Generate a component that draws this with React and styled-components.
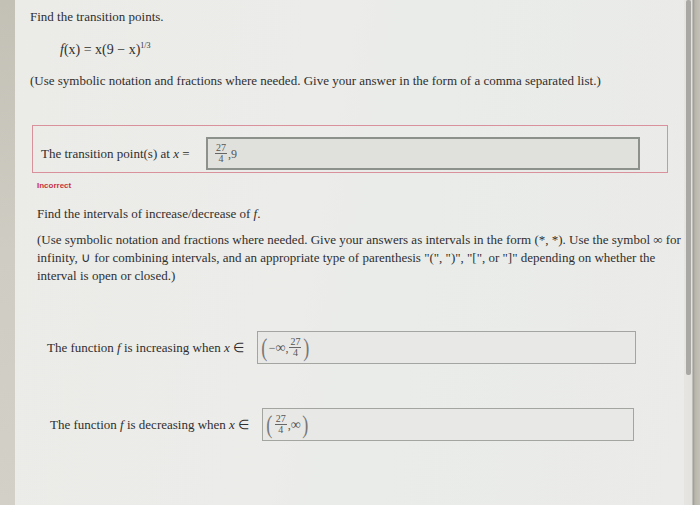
import React from 'react';
import styled, { createGlobalStyle } from 'styled-components';

const GlobalStyle = createGlobalStyle`
  html, body { margin: 0; padding: 0; }
  body {
    background: #c9c6bd;
    font-family: "Liberation Serif", "Times New Roman", serif;
    color: #2f2f2f;
  }
  * { box-sizing: border-box; }
`;

const Screen = styled.div`
  display: flex;
  width: 700px;
  height: 505px;
  overflow: hidden;
`;

const LeftStrip = styled.div`
  width: 15px;
  flex: none;
  background: linear-gradient(180deg, #c3c1b6 0%, #cfccc3 50%, #d3d0c8 100%);
`;

const Panel = styled.div`
  flex: 1;
  background: linear-gradient(100deg, #ebebe8 0%, #ececea 45%, #e9ece9 55%, #ebebe9 100%);
  padding-top: 8px;
  font-size: 13px;
  line-height: 18px;
`;

const ScrollTrack = styled.div`
  width: 16px;
  flex: none;
  display: flex;
  background: linear-gradient(90deg, #e6e5e2 0px, #e3e2de 8px, #9c9a94 9px, #b9b6ad 11px, #c4c1b8 16px);
`;

const Thumb = styled.div`
  width: 5px;
  height: 375px;
  margin-left: 2px;
  background: #a9a8a4;
  border-radius: 2px;
`;

const Line = styled.div`
  margin-left: ${p => p.$indent || 0}px;
  margin-top: ${p => p.$top || 0}px;
  font-size: ${p => p.$size || 13}px;
  white-space: nowrap;
`;

const I = styled.i`
  font-style: italic;
`;

const Sup = styled.sup`
  font-size: 8px;
  vertical-align: 6px;
  line-height: 0;
`;

const RedBox = styled.div`
  margin: 35px 0 0 17px;
  width: 636px;
  height: 48px;
  border: 1px solid #d9929b;
  display: flex;
  align-items: center;
  padding: 11px 0 2px;
`;

const Label = styled.span`
  white-space: nowrap;
  width: ${p => p.$w}px;
  flex: none;
  padding-left: ${p => p.$pad || 0}px;
`;

const AnswerBox = styled.div`
  width: ${p => p.$w}px;
  height: 33px;
  border: ${p => (p.$dark ? '2px solid #8d918c' : '1px solid #a3a5a1')};
  background: ${p => (p.$dark ? '#e0e1dd' : '#e8e8e6')};
  display: flex;
  align-items: center;
  padding-left: ${p => p.$pad || 4}px;
  font-size: 12px;
  color: #555;
`;

const Inf = styled.span`
  font-size: 14px;
`;

const Frac = styled.span`
  display: inline-flex;
  flex-direction: column;
  align-items: center;
  font-size: 10px;
  line-height: 10px;
  margin: 0 1px;
  span:first-child {
    border-bottom: 1px solid #666;
    padding: 0 1px;
  }
`;

const Paren = styled.span`
  font-size: 26px;
  line-height: 24px;
  color: #777;
  transform: scaleX(0.7);
  display: inline-block;
`;

const Incorrect = styled.div`
  margin: 8px 0 0 22px;
  font-family: "Liberation Sans", Arial, sans-serif;
  font-weight: bold;
  font-size: 8px;
  line-height: 10px;
  color: #c8323f;
`;

const Row = styled.div`
  display: flex;
  align-items: center;
  margin-top: ${p => p.$top}px;
`;

const Fraction = ({ n, d }) => (
  <Frac>
    <span>{n}</span>
    <span>{d}</span>
  </Frac>
);

export default function App() {
  return (
    <>
      <GlobalStyle />
      <Screen>
        <LeftStrip />
        <Panel>
          <Line $indent={15}>Find the transition points.</Line>
          <Line $indent={45} $top={15} $size={14}>
            <I>f</I>(x) = x(9 − x)<Sup>1/3</Sup>
          </Line>
          <Line $indent={15} $top={13}>
            (Use symbolic notation and fractions where needed. Give your answer in the form of a comma separated list.)
          </Line>

          <RedBox>
            <Label $w={173} $pad={8}>The transition point(s) at <I>x</I> =</Label>
            <AnswerBox $w={434} $dark $pad={6}>
              <Fraction n="27" d="4" />,9
            </AnswerBox>
          </RedBox>
          <Incorrect>Incorrect</Incorrect>

          <Line $indent={22} $top={14}>
            Find the intervals of increase/decrease of <I>f</I>.
          </Line>
          <Line $indent={22} $top={8}>
            (Use symbolic notation and fractions where needed. Give your answers as intervals in the form (*, *). Use the symbol ∞ for
          </Line>
          <Line $indent={22}>
            infinity, ∪ for combining intervals, and an appropriate type of parenthesis "(", ")", "[", or "]" depending on whether the
          </Line>
          <Line $indent={22}>interval is open or closed.)</Line>

          <Row $top={46}>
            <Label $w={242} $pad={32}>The function <I>f</I> is increasing when <I>x</I> ∈</Label>
            <AnswerBox $w={379} $pad={2}>
              <Paren>(</Paren>−<Inf>∞</Inf>,<Fraction n="27" d="4" /><Paren>)</Paren>
            </AnswerBox>
          </Row>

          <Row $top={44}>
            <Label $w={247} $pad={35}>The function <I>f</I> is decreasing when <I>x</I> ∈</Label>
            <AnswerBox $w={372} $pad={2}>
              <Paren>(</Paren><Fraction n="27" d="4" />,<Inf>∞</Inf><Paren>)</Paren>
            </AnswerBox>
          </Row>
        </Panel>
        <ScrollTrack>
          <Thumb />
        </ScrollTrack>
      </Screen>
    </>
  );
}
